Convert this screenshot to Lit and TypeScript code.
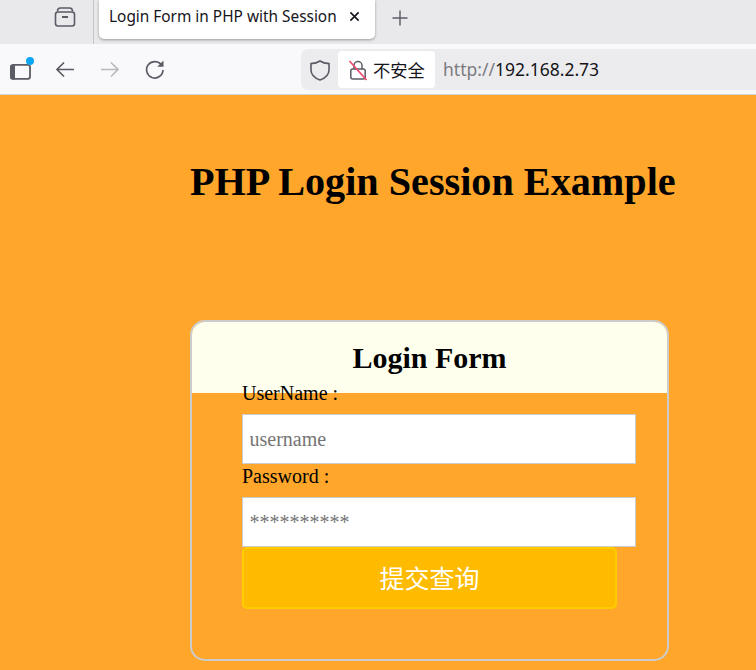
import { LitElement, html, css } from "lit";
import { customElement } from "lit/decorators.js";

@customElement("app-root")
export class AppRoot extends LitElement {
  static styles = css`
    :host { display: block; width: 756px; height: 670px; overflow: hidden; background: #ffa62b; font-family: "Liberation Serif", "Noto Sans CJK SC", serif; color: #000; }
    * { box-sizing: border-box; }
    .ui { font-family: "Noto Sans", "Noto Sans CJK SC", sans-serif; }
    .tabs { height: 44px; background: #e9e9ec; display: flex; align-items: flex-start; }
    .pane { width: 94px; height: 44px; border-right: 1px solid #c4c4c8; display: flex; padding: 6px 0 0 54px; }
    .tab { width: 276px; height: 39px; margin-left: 5px; background: #fff; border-radius: 0 0 5px 5px; box-shadow: 0 1px 3px rgba(0,0,0,.35); display: flex; align-items: center; padding: 0 15px 7px 10px; font-size: 15.4px; color: #15141a; justify-content: space-between; white-space: nowrap; }
    .plus { margin: 10px 0 0 17px; display: block; }
    .bar { height: 51px; background: #f9f9fb; border-bottom: 1px solid #d4d4d8; display: flex; align-items: center; padding: 1px 0 0 9px; }
    .btn { display: block; flex: none; }
    .sq { position: relative; width: 24px; height: 24px; margin-right: 20px; }
    .dot { position: absolute; left: 17px; top: -1px; width: 8px; height: 8px; border-radius: 50%; background: #0ea5f5; }
    .nav { display: flex; gap: 21px; margin-right: 134px; margin-top: -1px; }
    .url { flex: 1; height: 41px; background: #ececee; border-radius: 7px 0 0 7px; display: flex; align-items: center; padding-left: 8px; }
    .chip { width: 97px; height: 37px; margin-left: 7px; background: #fff; border-radius: 4px; display: flex; align-items: center; gap: 5px; padding-left: 10px; font-size: 17.3px; color: #15141a; white-space: nowrap; }
    .addr { margin-left: 8px; padding-bottom: 2px; font-size: 17.5px; color: #15141a; white-space: nowrap; }
    .addr span { color: #7b7b80; }
    main { padding-left: 190px; }
    h1 { margin: 0; padding-top: 64px; height: 225px; font-size: 40.2px; line-height: 46px; font-weight: bold; white-space: nowrap; }
    .card { width: 479px; height: 341px; border: 2px solid #ccc; border-radius: 15px; overflow: hidden; }
    h2 { margin: 0; height: 71px; background: #ffffed; font-size: 30px; line-height: 34px; padding-top: 19px; text-align: center; font-weight: bold; }
    form { margin-top: -12px; padding-left: 50px; display: flex; flex-direction: column; align-items: flex-start; position: relative; }
    label { font-size: 20px; line-height: 23px; position: relative; top: 0.5px; }
    input { display: block; width: 394px; height: 50px; margin-top: 10px; padding: 1px 6.5px 0; border: 1px solid #ccc; background: #fff; font: 20px "Liberation Serif", serif; outline: none; border-radius: 0; }
    input::placeholder { color: #757575; opacity: 1; }
    button { width: 375px; height: 62px; background: #ffbb00; border: 2px solid #ffcc00; border-radius: 5px; color: #fff; font: 25px "Noto Sans CJK SC", sans-serif; padding: 0 0 3px 0; }
  `;

  render() {
    return html`
      <div class="tabs ui">
        <div class="pane">
          <svg width="22" height="22" viewBox="0 0 22 22" fill="none" stroke="#5b5b66" stroke-width="1.6" class="btn">
            <path d="M3.5 5.5C3.5 3 4.5 2 6.5 2h9c2 0 3 1 3 3.5" />
            <rect x="1.5" y="6" width="19" height="14" rx="2.5" />
            <path d="M8 11h6" stroke-width="2" />
          </svg>
        </div>
        <div class="tab">
          <span>Login Form in PHP with Session</span>
          <svg width="11" height="11" viewBox="0 0 12 12" stroke="#15141a" stroke-width="1.7" class="btn"><path d="M1.5 1.5l9 9M10.5 1.5l-9 9" /></svg>
        </div>
        <svg class="plus" width="16" height="16" viewBox="0 0 16 16" stroke="#5b5b66" stroke-width="1.4"><path d="M8 .5v15M.5 8h15" /></svg>
      </div>
      <div class="bar ui">
        <div class="sq">
          <svg width="24" height="24" viewBox="0 0 24 24" fill="none" class="btn">
            <rect x="2" y="6.8" width="19" height="14" rx="2" stroke="#5b5b66" stroke-width="1.8" />
            <path d="M1 9a2 2 0 0 1 2-2h3v14.5H3a2 2 0 0 1-2-2z" fill="#5b5b66" />
          </svg>
          <span class="dot"></span>
        </div>
        <div class="nav">
          <svg width="24" height="24" viewBox="0 0 24 24" fill="none" stroke="#5b5b66" stroke-width="1.7" class="btn"><path d="M21 12.5H4M11 5.5l-7 7 7 7" /></svg>
          <svg width="24" height="24" viewBox="0 0 24 24" fill="none" stroke="#b9b9be" stroke-width="1.7" class="btn"><path d="M3 12.5h17M13 5.5l7 7-7 7" /></svg>
          <svg width="24" height="24" viewBox="0 0 24 24" fill="none" stroke="#5b5b66" stroke-width="1.7" class="btn"><path d="M18.8 8.5A8.2 8.2 0 1 0 20 13" /><path d="M20.5 3.5v6.2h-6.2z" fill="#5b5b66" stroke="none" /></svg>
        </div>
        <div class="url">
          <svg width="22" height="24" viewBox="0 0 22 24" fill="none" stroke="#5b5b66" stroke-width="1.6" class="btn"><path d="M11 3c2.5 1.6 5 2.4 9 2.6V12c0 4.7-3.5 8-9 10-5.500-2-9-5.300-9-10V5.600C6 5.400 8.500 4.600 11 3z" /></svg>
          <div class="chip">
            <svg width="20" height="24" viewBox="0 0 20 24" fill="none" class="btn">
              <path d="M6 11V7.500a4 4 0 0 1 8 0V11" stroke="#5b5b66" stroke-width="1.500" />
              <rect x="2.800" y="11" width="14.400" height="10" rx="2" stroke="#5b5b66" stroke-width="1.500" />
              <path d="M1.500 3l17 19" stroke="#f0476e" stroke-width="1.700" />
            </svg>
            <span>不安全</span>
          </div>
          <div class="addr"><span>http://</span>192.168.2.73</div>
        </div>
      </div>
      <main>
        <h1>PHP Login Session Example</h1>
        <div class="card">
          <h2>Login Form</h2>
          <form @submit=${(e: Event) => e.preventDefault()}>
            <label>UserName :</label>
            <input type="text" placeholder="username" />
            <label>Password :</label>
            <input type="password" placeholder="**********" />
            <button type="submit">提交查询</button>
          </form>
        </div>
      </main>
    `;
  }
}
